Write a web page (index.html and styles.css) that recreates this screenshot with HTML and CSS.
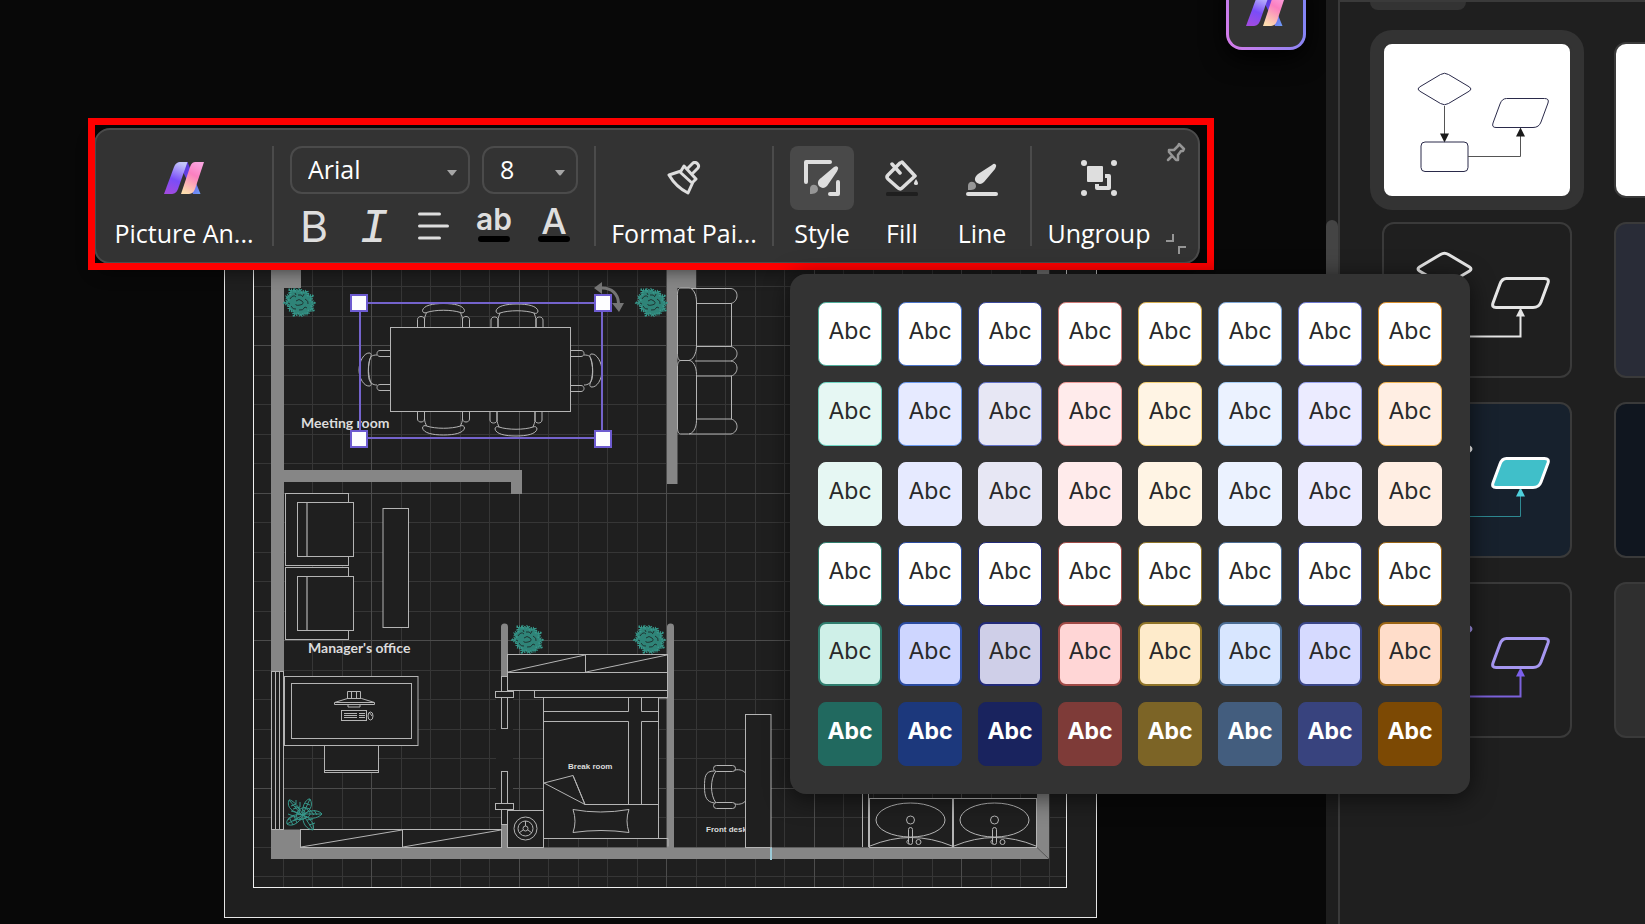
FILE: index.html
```html
<!DOCTYPE html>
<html lang="en">
<head>
<meta charset="utf-8">
<title>Floor plan editor</title>
<link rel="stylesheet" href="styles.css">
</head>
<body>
<svg class="defs" width="0" height="0" aria-hidden="true">
  <defs>
    <linearGradient id="lg-left" x1="0.6" y1="0" x2="0.3" y2="1"><stop offset="0" stop-color="#c3c6fb"/><stop offset="0.55" stop-color="#7a4df8"/><stop offset="1" stop-color="#a04be0"/></linearGradient>
    <linearGradient id="lg-mid" x1="0" y1="0" x2="1" y2="1"><stop offset="0" stop-color="#4a2bd0"/><stop offset="0.5" stop-color="#6a48e8"/><stop offset="1" stop-color="#6fa0f8"/></linearGradient>
    <linearGradient id="lg-right" x1="0.7" y1="0" x2="0.3" y2="1"><stop offset="0" stop-color="#fba4e0"/><stop offset="0.4" stop-color="#fb7fc0"/><stop offset="1" stop-color="#fcdcae"/></linearGradient>
    <symbol id="logo" viewBox="0 0 40 32">
      <path d="M14 0h9.500l13 32H29L22 16z" fill="url(#lg-mid)"/>
      <path d="M17 0h6.500L14 27c-1.500 4-4 5-7 5H0L10 5c1.500-4 4-5 7-5z" fill="url(#lg-left)"/>
      <path d="M32 0h8L31 27c-1.500 4-4 5-7 5h-7L26 5c1.400-4 3-5 6-5z" fill="url(#lg-right)"/>
    </symbol>
    <symbol id="flow" viewBox="0 0 186 152">
      <path class="shape" d="M56.500 30.500q4-2.500 8 0l21 12.500q3 2 0 4l-21 12.500q-4 2.500-8 0l-21-12.500q-3-2 0-4z"/>
      <path class="wire" d="M60.500 62v28"/>
      <path class="tip" d="M56 89.500h9l-4.500 9z"/>
      <rect class="shape" x="37" y="98" width="47" height="29.500" rx="4"/>
      <path class="wire" d="M84 112.500h52.500V90"/>
      <path class="tip" d="M132 92.500h9l-4.500-9z"/>
      <path class="shape" d="M122.500 54.500h38q5 0 3.500 4.500l-7 19q-2 5.500-8 5.500h-37q-4.500 0-3-4.500l7-19q2-5.500 6.500-5.500z"/>
    </symbol>
    <symbol id="chair" viewBox="-30 -26 60 28" overflow="visible">
      <path d="M-21-17c1-5 10-7 21-7s20 2 21 7c0 2-2 3-4 2-9-3-25-3-34 0-2 1-4 0-4-2z"/>
      <path d="M-19 0v-7c0-4 1-5 2-8M19 0v-7c0-4-1-5-2-8"/>
      <path d="M-26 0v-8c0-4 7-4 7 0v8M19 0v-8c0-4 7-4 7 0v8"/>
    </symbol>
    <symbol id="bush" viewBox="-16 -15 32 30" overflow="visible">
      <path class="mass" d="M-5-13l3 2 3-2 2 3 5-1 1 4 4 1-1 4 3 3-2 3 1 4-4 1-1 3-4 0-3 2-3-2-4 1-1-4-4-1 0-4-4-3 3-3-2-3 4-3 0-4 4 0z"/>
      <path class="rim" d="M-5-13l3 2 3-2 2 3 5-1 1 4 4 1-1 4 3 3-2 3 1 4-4 1-1 3-4 0-3 2-3-2-4 1-1-4-4-1 0-4-4-3 3-3-2-3 4-3 0-4 4 0z"/>
      <path class="dark" d="M-9-3q3-5 6-2M-1-7q4-1 5 2M6-3q4 2 3 5M-8 4q2 4 5 3M0 8q4 1 6-3M-3-1q3-3 6 0t-2 4-4-1M-11 1l2 1M-4-9l1 2M8 6l-2-1M5-8l-1 2"/>
    </symbol>
    <symbol id="fern" viewBox="-19 -16 38 32" overflow="visible">
      <path class="leaf" d="M0 1C-6-12-14-15-14-14c-3 8 4 12 14 15M0 1C-2-10 5-16 7-15c4 7-1 13-7 16M0 1C8-6 17-3 19 0 14 5 6 6 0 1M0 1C8 4 12 11 10 16 3 15-1 9 0 1M0 1C-4 10-12 13-16 10-18 4-8-1 0 1M-14-14-2 0M7-15 0 0M19 0H1M10 16 1 2M-16 10 0 1"/>
      <path class="leaf" d="M-12-8l5-2 0-4M-10-5l7-2 0-5M2-11l5 2M0-7l7 2M7-4l4 5M11-4l3 5M4 6l6-1M6 11l6-2M-13 5l3 6M-9 2l3 7M-5-3q5-6 10-1t-2 8-9 0 1-7M-15 0l8 3M-12-3l8 2M-15 6l6-5M-8-8q6 2 4 8M-6-1q5 4 9 0M-4 4q5 3 8-2M-1-5q4 2 3 6M-10 7q4-3 8-1"/>
    </symbol>
  </defs>
</svg>

<div class="app">
  <main class="canvas">
    <svg class="plan" width="1110" height="924" viewBox="0 0 1110 924" role="img" aria-label="Office floor plan">
      <rect class="page" x="224.500" y="150.500" width="872" height="767"/>
      <path class="grid" d="M283.500 180V887M312.500 180V887M342.500 180V887M401.500 180V887M430.500 180V887M460.500 180V887M489.500 180V887M548.500 180V887M578.500 180V887M607.500 180V887M637.500 180V887M696.500 180V887M725.500 180V887M755.500 180V887M784.500 180V887M843.500 180V887M873.500 180V887M902.500 180V887M932.500 180V887M991.500 180V887M1020.500 180V887M1049.500 180V887M254 286.500H1066M254 316.500H1066M254 375.500H1066M254 404.500H1066M254 434.500H1066M254 463.500H1066M254 522.500H1066M254 552.500H1066M254 581.500H1066M254 611.500H1066M254 670.500H1066M254 699.500H1066M254 729.500H1066M254 758.500H1066M254 817.500H1066M254 847.500H1066M254 876.500H1066"/>
      <path class="grid major" d="M371.500 180V887M519.500 180V887M666.500 180V887M814.500 180V887M961.500 180V887M254 345.500H1066M254 493.500H1066M254 640.500H1066M254 788.500H1066"/>
      <rect class="frame" x="253.500" y="179.500" width="813" height="708"/>

      <path class="wall" d="M271 200h30v88h-17v182h238v24h-11v-12H284v190h-13zM667 200h29v88h-18.500v196H667zM271 829.500h29.500v18H1037V200h12v659H271z"/>
      <path class="wall" d="M501 676v-49a3.500 3.500 0 0 1 7 0v49zM501 824h7v24h-7zM667 848V627a3.500 3.500 0 0 1 7 0v221z"/>
      <path class="corner" d="M1037 847.500l12 11.500"/>
      <path class="glass" d="M771 847v13"/>

      <g class="ink">
        <rect x="271.500" y="671.500" width="12" height="158"/><path d="M275.500 672v157M279.500 672v157"/>
        <rect x="285.500" y="493.500" width="63" height="72"/><rect x="297.500" y="502.500" width="56" height="54"/>
        <rect x="285.500" y="567.500" width="63" height="72"/><rect x="297.500" y="576.500" width="56" height="54"/>
        <path class="seam" d="M307 503v53M307 577v53"/>
        <rect x="383" y="508.500" width="25.500" height="119"/>
        <rect x="284.500" y="676.500" width="133.500" height="69"/><rect x="291.500" y="683.500" width="120" height="55"/>
        <rect x="324.500" y="745.500" width="54" height="27"/><path d="M325 770.500h53"/>
        <path d="M347.500 699v-7.500h13v7.500M351.500 692v6M356.500 692v6M334.500 702.500l13-4h14l13 4v2h-40zM335 702.500h39M348 705v2h12v-2"/>
        <rect x="341.500" y="710.500" width="25" height="10"/><path d="M344 713.500h13M344 715.500h13M344 717.500h13M359 713.500h6M359 715.500h6M359 717.500h6"/>
        <ellipse cx="370.500" cy="716" rx="2.500" ry="4"/><path d="M369 712l3 4"/>
        <rect x="300.500" y="829.500" width="201" height="18"/><path d="M402.500 829v18M301 847l101-17M403 847l98-17"/>

        <rect x="496" y="698" width="17" height="105" class="gap"/>
        <rect x="501.500" y="676.500" width="6" height="52"/><rect x="495.500" y="691.500" width="18" height="6"/>
        <rect x="501.500" y="771.500" width="6" height="53"/><rect x="495.500" y="803.500" width="18" height="6"/>
        <rect x="507.500" y="654.500" width="160" height="18"/><path d="M585.500 655v17M508 672l77-17M586 672l81-17"/>
        <rect x="507.500" y="672.500" width="160" height="18"/><rect x="534.500" y="690.500" width="133" height="7"/>
        <rect x="543.500" y="697.500" width="115" height="141"/>
        <path d="M544 711.500h84.500v-14M544 721.500h84.500v83M641.500 698v13.500h17M658 721.500h-16.500v83M585 804.500h73.500M544 783l29-7.500 12 29zM585 804.500l-12-29"/>
        <path d="M573 809.500q27 5 56 0-4 11 0 23-28-4-56 0 4-11 0-23z"/>
        <path d="M544 838.500h124v8M658.500 698h9"/>
        <rect x="507.500" y="810.500" width="36" height="37"/>
        <circle cx="525.500" cy="828.500" r="11.500"/><circle cx="525.500" cy="828.500" r="7.500"/><circle cx="525.500" cy="828.500" r="2.500"/><path d="M525.500 826v-5M523 830l-4 3M528 830l4 3"/>

        <path d="M691 288.500h40c8 1 8 13 0 15h-34M731.500 303.500v43M697 346.500h34c8 2 8 12 0 14.500h-36M731 361c8 1 8 13 0 15h-34M731.500 376v43M697 419h34c8 2 8 13 0 15h-42"/>
        <path d="M681 288h8c4 0 7.500 6 7.500 14v44c0 8-4 14.500-8 14.500h-8c-2 0-3-3-3-6v-60c0-4 1-6.500 3.500-6.500zM681 360.500h8c4 0 7.500 6 7.500 14v46c0 8-4 13.500-8 13.500h-8c-2 0-3-3-3-6v-61c0-4 1-6.500 3.500-6.500z"/>

        <path d="M862.500 780v67M868.500 780v67"/>
        <rect x="869.500" y="798.500" width="83" height="49"/><rect x="953.500" y="798.500" width="83" height="49"/>
        <ellipse cx="910.500" cy="820" rx="34.500" ry="17"/><ellipse cx="994.500" cy="820" rx="34.500" ry="17"/>
        <path d="M870 846q41-17 82 0M954 846q41-17 82 0"/>
        <circle cx="910.500" cy="820" r="4"/><circle cx="994.500" cy="820" r="4"/>
        <rect class="tap" x="908.500" y="827.500" width="4" height="17" rx="2"/><rect class="tap" x="992.500" y="827.500" width="4" height="17" rx="2"/>
        <circle cx="918.500" cy="842" r="2.500"/><circle cx="1002.500" cy="842" r="2.500"/><path d="M908 840c-2 1-1 4 1 4M992 840c-2 1-1 4 1 4"/>

        <rect x="390.500" y="327.500" width="180" height="84"/>
        <use href="#chair" x="-30" y="-26" width="60" height="28" transform="translate(443.500 327.500)"/>
        <use href="#chair" x="-30" y="-26" width="60" height="28" transform="translate(517 328)"/>
        <use href="#chair" x="-30" y="-26" width="60" height="28" transform="translate(443.500 411) rotate(180)"/>
        <use href="#chair" x="-30" y="-26" width="60" height="28" transform="translate(516 412) rotate(180)"/>
        <path d="M390 350.500h-10c-4 0-4 6 0 6h10M390 384.500h-10c-4 0-4 6 0 6h10M377 355c-5 0-7 1-8 8-1 6-1 11 0 16 1 4 4 6 8 6M370 353c-6-1-11 9-11 17s5 17 11 16c2-1 1-3 0-6-2-7-2-15 0-21 1-3 2-5 0-6z"/>
        <path d="M571 350.500h10c4 0 4 6 0 6h-10M571 385.500h10c4 0 4 6 0 6h-10M584 355c5 0 7 1 8 8 1 6 1 11 0 16-1 4-4 6-8 6M591 354c6-1 11 9 11 17s-5 17-11 16c-2-1-1-3 0-6 2-7 2-15 0-21-1-3-2-5 0-6z"/>
      </g>
      <g class="plants">
        <use href="#bush" x="283" y="287" width="32" height="30"/>
        <use href="#bush" x="635" y="287" width="32" height="30"/>
        <use href="#bush" x="511" y="624" width="32" height="30"/>
        <use href="#bush" x="633" y="624" width="32" height="30"/>
        <use href="#fern" x="284" y="798" width="38" height="32"/>
      </g>
      <text class="room" x="301" y="428">Meeting room</text>
      <text class="room" x="308" y="653">Manager's office</text>
      <text class="room small" x="568" y="769">Break room</text>
      <text class="room small" x="706" y="832">Front desk</text>
      <g class="ink">
        <rect x="745.500" y="714.500" width="25.500" height="133"/>
        <rect x="713.500" y="765.500" width="22" height="6" rx="3"/><rect x="713.500" y="802.500" width="22" height="6" rx="3"/>
        <path d="M735 770c5-1 9 1 10.500 3M735 804c5 1 9-1 10.500-3M714 771c-9 0-9.500 6-9.500 16s2 15 10 16M716 771c-6 8-6 24 0 32"/>
      </g>

      <rect class="select-box" x="360" y="303" width="242" height="135"/>
      <path class="rotate" d="M602 288c10 0 16 6 16.500 15"/><path class="rotate-tip" d="M594 288l8-6v12zM612 303h12l-5 9z"/>
      <g class="handles"><rect x="351" y="295" width="16" height="16"/><rect x="595" y="295" width="16" height="16"/><rect x="351" y="431" width="16" height="16"/><rect x="595" y="431" width="16" height="16"/></g>
    </svg>
    <button class="ai-button" aria-label="AI assistant"><svg width="40" height="32"><use href="#logo"/></svg></button>
  </main>

  <div class="scrollbar"><div class="thumb"></div></div>

  <aside class="themes">
    <div class="tab"></div>
    <div class="cards">
      <button class="card light selected" aria-label="Theme 1"><svg width="186" height="152"><use href="#flow"/></svg></button>
      <button class="card light" aria-label="Theme 2"></button>
      <button class="card mono" aria-label="Theme 3"><svg width="186" height="152"><use href="#flow"/></svg></button>
      <button class="card slate" aria-label="Theme 4"></button>
      <button class="card teal" aria-label="Theme 5"><svg width="186" height="152"><use href="#flow"/></svg></button>
      <button class="card navy" aria-label="Theme 6"></button>
      <button class="card violet" aria-label="Theme 7"><svg width="186" height="152"><use href="#flow"/></svg></button>
      <button class="card ash" aria-label="Theme 8"></button>
    </div>
  </aside>
</div>

<div class="toolbar" role="toolbar" aria-label="Format">
  <button class="tool wide"><span class="icon"><svg width="40" height="32"><use href="#logo"/></svg></span><span class="label">Picture An...</span></button>
  <div class="sep"></div>
  <div class="font-group">
    <div class="row">
      <div class="drop family"><select aria-label="Font"><option>Arial</option></select><svg width="10" height="6" viewBox="0 0 10 6"><path d="M0 0h10L6 5q-1 1-2 0z" fill="#a6a6a6"/></svg></div>
      <div class="drop size"><select aria-label="Font size"><option>8</option></select><svg width="10" height="6" viewBox="0 0 10 6"><path d="M0 0h10L6 5q-1 1-2 0z" fill="#a6a6a6"/></svg></div>
    </div>
    <div class="row marks">
      <button class="mark m-bold" aria-label="Bold">B</button>
      <button class="mark m-italic" aria-label="Italic">I</button>
      <button class="mark" aria-label="Align"><svg width="48" height="38"><path d="M9.500 8h20M9.500 20h28M9.500 32h20" stroke="#dedede" stroke-width="3" stroke-linecap="round"/></svg></button>
      <button class="mark bar m-ab" aria-label="Highlight">ab</button>
      <button class="mark bar m-a" aria-label="Font color">A</button>
    </div>
  </div>
  <div class="sep"></div>
  <button class="tool wide"><span class="icon"><svg width="34" height="34" viewBox="0 0 34 34" fill="none" stroke="#dedede" stroke-width="3" stroke-linejoin="round" stroke-linecap="round"><path d="M2 14l12-4L17 5l12 13-3 3-5 11Q9 26 2 14zM13 11l12 11M20 8l6-6c3-2 7 2 5 5l-6 6"/></svg></span><span class="label">Format Pai...</span></button>
  <div class="sep"></div>
  <div class="group">
    <button class="tool active"><span class="icon"><svg width="36" height="36" viewBox="0 0 36 36"><path d="M2 22V2h24M34 22v12H26" fill="none" stroke="#dedede" stroke-width="4" stroke-linecap="round" stroke-linejoin="round"/><path d="M33 6.500c2 1 1 3 0 5L23 26c-3 3-6 2-8 0-2-3-1-6 2-8L30 7q2-1 3-.5z" fill="#dedede"/><path d="M6 34v-5c0-6 8-5 8 0 0 4-4 5-8 5z" fill="#969696"/></svg></span><span class="label">Style</span></button>
    <button class="tool"><span class="icon"><svg width="34" height="38" viewBox="0 0 34 38"><path d="M17 3L30 17 17 29Q15 31 12 28L3 20q-2-2 0-4L15 4M7 5l8 9" fill="none" stroke="#dedede" stroke-width="3.500" stroke-linejoin="round" stroke-linecap="round"/><path d="M31 20q4 6 0 6t0-6z" fill="#dedede"/><rect x="1" y="33" width="32" height="4" rx="1.500" fill="#1f1f1f"/></svg></span><span class="label">Fill</span></button>
    <button class="tool"><span class="icon"><svg width="34" height="38" viewBox="0 0 34 38"><path d="M30 5c2 1 1 3 0 5L19 23c-3 3-6 2-8 0-2-3-1-5 2-8L27 6q2-2 3-1z" fill="#dedede"/><path d="M3 31v-4c0-6 8-5 8 0 0 4-4 4-8 4z" fill="#969696"/><rect x="1" y="33" width="32" height="4" rx="2" fill="#dedede"/></svg></span><span class="label">Line</span></button>
  </div>
  <div class="sep"></div>
  <button class="tool mid"><span class="icon"><svg width="36" height="36" viewBox="0 0 36 36"><g fill="#dedede"><circle cx="3" cy="3" r="3"/><circle cx="33" cy="3" r="3"/><circle cx="3" cy="33" r="3"/><circle cx="33" cy="33" r="3"/><rect x="6" y="6" width="16" height="16" rx="1"/></g><path d="M24 16h4v12H16v-4" fill="none" stroke="#dedede" stroke-width="4" stroke-linejoin="round"/></svg></span><span class="label">Ungroup</span></button>
  <div class="edge">
    <button aria-label="Pin"><svg width="20" height="20" viewBox="0 0 20 20" fill="none" stroke="#969696" stroke-width="2.500" stroke-linejoin="round" stroke-linecap="round"><path d="M13 2l5 5-1 2-2 0-3 4 0 5-2 0L3 10l0-2 5 0 4-4zM6 14l-4 4"/></svg></button>
    <button aria-label="Collapse"><svg width="20" height="20" viewBox="0 0 20 20" fill="none" stroke="#969696" stroke-width="2"><path d="M7 0v7H0M13 20v-7h7"/></svg></button>
  </div>
</div>
<div class="outline"></div>

<div class="styles">
  <div class="line outlined"><button>Abc</button><button>Abc</button><button>Abc</button><button>Abc</button><button>Abc</button><button>Abc</button><button>Abc</button><button>Abc</button></div>
  <div class="line tinted"><button>Abc</button><button>Abc</button><button>Abc</button><button>Abc</button><button>Abc</button><button>Abc</button><button>Abc</button><button>Abc</button></div>
  <div class="line plain"><button>Abc</button><button>Abc</button><button>Abc</button><button>Abc</button><button>Abc</button><button>Abc</button><button>Abc</button><button>Abc</button></div>
  <div class="line hairline"><button>Abc</button><button>Abc</button><button>Abc</button><button>Abc</button><button>Abc</button><button>Abc</button><button>Abc</button><button>Abc</button></div>
  <div class="line medium"><button>Abc</button><button>Abc</button><button>Abc</button><button>Abc</button><button>Abc</button><button>Abc</button><button>Abc</button><button>Abc</button></div>
  <div class="line solid"><button>Abc</button><button>Abc</button><button>Abc</button><button>Abc</button><button>Abc</button><button>Abc</button><button>Abc</button><button>Abc</button></div>
</div>
</body>
</html>
```
FILE: styles.css
```css
* { box-sizing: border-box; }
body { margin: 0; height: 100vh; overflow: hidden; position: relative; background: #080808; color: #fff; font-family: "Open Sans", "Noto Sans", sans-serif; }
button { margin: 0; padding: 0; border: 0; background: none; color: inherit; font: inherit; }
svg { display: block; }
.defs { position: absolute; }

.app { display: flex; height: 100%; }
.canvas { flex: 1; position: relative; overflow: hidden; background: #080808; }
.plan { position: absolute; left: 0; top: 0; }
.page { fill: #1f1f1f; stroke: #e6e6e6; }
.frame { fill: none; stroke: #f0f0f0; }
.grid { stroke: #363636; fill: none; }
.grid.major { stroke: #4c4c4c; }
.wall { fill: #868686; }
.corner { stroke: #555; }
.glass { stroke: #9ccbd8; stroke-width: 2; }
.ink { stroke: #b4b4b4; fill: #1f1f1f; }
.ink path, .ink ellipse, .ink circle, .ink .tap, .ink use { fill: none; }
.ink .gap { stroke: none; }
.ink .seam { stroke: #777; stroke-width: 2; }
.mass { fill: #2f8478; }
.rim { fill: none; stroke: #37988b; stroke-width: 3; stroke-dasharray: 1 1; }
.dark { fill: none; stroke: #1f3532; stroke-width: 1; }
.leaf { fill: none; stroke: #37988b; stroke-width: 1; }
.room { fill: #dcdcdc; font: 700 14px Lato, sans-serif; }
.room.small { font: 700 8px "Liberation Sans", sans-serif; }
.select-box { fill: none; stroke: #7463cc; stroke-width: 2; }
.handles { fill: #fdfdff; stroke: #6d5bd0; stroke-width: 2; }
.rotate { fill: none; stroke: #757575; stroke-width: 3; }
.rotate-tip { fill: #757575; }

.ai-button { position: absolute; right: 20px; top: -30px; width: 80px; height: 80px; border: 3px solid transparent; border-radius: 16px; background: linear-gradient(#333, #333) padding-box, linear-gradient(70deg, #d87bea, #8585f5 80%) border-box; display: grid; place-items: center; box-shadow: 0 8px 24px #000; }

.scrollbar { width: 12px; background: #1e1e1e; padding-top: 220px; }
.thumb { height: 300px; border-radius: 6px; background: #444; }
.themes { width: 307px; overflow: hidden; background: #1f1f1f; border-left: 2px solid #3a3a3a; border-top: 2px solid #3a3a3a; }
.tab { width: 96px; height: 8px; margin-left: 30px; border-radius: 0 0 10px 10px; background: #333; }
.cards { display: grid; grid-template-columns: 190px 190px; grid-auto-rows: 156px; gap: 24px 42px; padding: 32px 42px; }
.card { border: 2px solid #3a3a3a; border-radius: 12px; overflow: hidden; background: #1f1f1f; fill: none; }
.card.selected { border-color: #333; border-radius: 10px; box-shadow: 0 0 0 12px #333; }
.card.light { background: #fff; --shape: #2a2a4a; --wire: #555; --tip: #1a1a1a; --w: 1; --ww: 1; }
.card.mono { --shape: #e6e6e6; --wire: #e6e6e6; --tip: #e6e6e6; --w: 3; --ww: 2; }
.card.teal { background: #17212d; --shape: #fff; --wire: #2e8992; --tip: #4fd0dc; --fill: #40bfc9; --w: 3; --ww: 1; }
.card.violet { --shape: #a596f0; --wire: #7c62dc; --tip: #7c60ec; --w: 3; --ww: 2; }
.card.slate { background: #292c37; }
.card.navy { background: #10161f; }
.card.ash { background: #2f2f2f; }
.shape { fill: var(--fill, none); stroke: var(--shape); stroke-width: var(--w); }
.wire { fill: none; stroke: var(--wire); stroke-width: var(--ww); }
.tip { fill: var(--tip); stroke: none; }

.toolbar { position: absolute; left: 94px; top: 128px; display: flex; align-items: flex-start; height: 136px; padding-top: 16px; border: 2px solid #4b4b4b; border-radius: 16px; background: #333; box-shadow: 0 8px 16px rgba(0, 0, 0, .5); font-size: 25px; }
.outline { position: absolute; left: 88px; top: 118px; width: 1126px; height: 152px; border: 7px solid #f00; pointer-events: none; }
.sep { width: 2px; height: 100px; background: #4b4b4b; }
.tool { width: 80px; display: flex; flex-direction: column; align-items: center; gap: 8px; white-space: nowrap; }
.tool.wide { width: 176px; }
.tool.mid { width: 134px; }
.icon { width: 64px; height: 64px; border-radius: 8px; display: grid; place-items: center; }
.active .icon { background: #494949; }
.label { line-height: 30px; }
.group { display: flex; padding: 0 8px; }
.font-group { display: grid; gap: 12px; padding: 0 16px; }
.row { display: flex; gap: 12px; }
.drop { position: relative; }
.family { width: 180px; }
.size { width: 96px; }
.drop select { display: block; appearance: none; width: 100%; height: 48px; padding: 0 16px 2px; border: 2px solid #4b4b4b; border-radius: 12px; background: #333; color: #fff; font: inherit; }
.drop svg { position: absolute; right: 13px; top: 24px; pointer-events: none; }
.mark { position: relative; width: 48px; height: 38px; color: #dedede; text-align: center; white-space: nowrap; }
.m-bold { padding-top: 2px; font: 400 43px/36px Inter, sans-serif; }
.m-italic { padding-top: 8px; font: italic 400 48px/30px "Liberation Mono", monospace; }
.m-ab { padding-bottom: 12px; font: 600 30px/26px Inter, sans-serif; }
.m-a { padding-bottom: 8px; font: 500 36px/30px Inter, sans-serif; }
.bar::after { content: ""; position: absolute; left: 8px; bottom: 2px; width: 32px; height: 6px; border-radius: 3px; background: #000; }
.edge { width: 32px; height: 112px; display: flex; flex-direction: column; justify-content: space-between; margin-top: -4px; }

.styles { position: absolute; left: 790px; top: 274px; display: grid; gap: 16px; padding: 28px; border-radius: 16px; background: #333; box-shadow: 0 4px 24px rgba(0, 0, 0, .6); }
.line { display: flex; gap: 16px; }
.line button { width: 64px; height: 64px; padding-bottom: 6px; border: 1px solid transparent; border-radius: 8px; color: #2a2a2a; font: 400 23px Inter, sans-serif; }
.line button:nth-child(1) { --a: #4fae9c; --b: #6fd6c4; --t: #e6f7f3; --d: #2f7d6e; --m: #cff0e8; --s: #21695f; }
.line button:nth-child(2) { --a: #4a74c9; --b: #6a9af0; --t: #e6eaff; --d: #2a4ba0; --m: #ced6ff; --s: #1c387c; }
.line button:nth-child(3) { --a: #3c4a9c; --b: #6272c8; --t: #e7e7f4; --d: #222a78; --m: #cfcfe8; --s: #19235e; }
.line button:nth-child(4) { --a: #d07a76; --b: #f09c98; --t: #ffebeb; --d: #a04a46; --m: #ffd6d6; --s: #7e3b38; }
.line button:nth-child(5) { --a: #d6ae50; --b: #f4cf74; --t: #fff4e4; --d: #8f7428; --m: #feebcb; --s: #7c6426; }
.line button:nth-child(6) { --a: #7fa8d8; --b: #a4cdf6; --t: #ebf2ff; --d: #4a6c94; --m: #d8e6ff; --s: #435d7e; }
.line button:nth-child(7) { --a: #6c78d0; --b: #99a4f2; --t: #ebebff; --d: #3a4688; --m: #d6daff; --s: #38437e; }
.line button:nth-child(8) { --a: #d98e2c; --b: #f2b452; --t: #ffeee3; --d: #9a6414; --m: #ffddca; --s: #7c4904; }
.outlined button { background: #fff; border-color: var(--a); }
.tinted button { background: var(--t); border-color: var(--b); }
.plain button { background: var(--t); border-color: var(--t); }
.hairline button { background: #fff; border-color: var(--d); }
.medium button { background: var(--m); border: 2px solid var(--d); }
.line.solid button { background: var(--s); border-color: var(--s); color: #fff; font-weight: 700; }
```
